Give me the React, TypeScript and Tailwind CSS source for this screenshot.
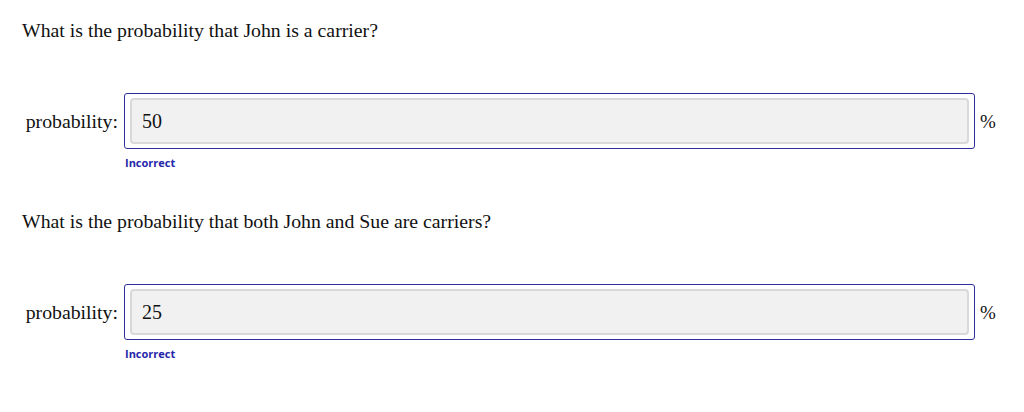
import React from 'react';

interface QuestionProps {
  prompt: string;
  value: string;
  first?: boolean;
}

const Question = ({ prompt, value, first }: QuestionProps) => {
  return (
    <div className={first ? 'pt-[19px]' : 'pt-[39px]'}>
      <p className="pl-[22px] text-[19.8px] leading-[23px] text-[#111]">{prompt}</p>

      <div className="mt-[51px] flex items-center">
        <label className="w-[118px] text-right text-[19.8px] leading-[23px] text-[#111]">
          probability:
        </label>
        <div className="ml-[6px] w-[851px] rounded-[3px] border border-[#2e2e9e] px-[5px] py-[4px]">
          <input
            readOnly
            value={value}
            className="h-[46px] w-full rounded-[4px] border-2 border-[#d9d9d9] bg-[#f1f1f1] pl-[10px] text-[20px] text-[#111] outline-none"
            style={{ fontFamily: '"Liberation Serif", serif' }}
          />
        </div>
        <span className="ml-[5px] text-[19px] leading-[23px] text-[#111]">%</span>
      </div>

      <div
        className="ml-[125px] mt-[6px] text-[11px] font-bold leading-[16px] text-[#2626aa]"
        style={{ fontFamily: '"Open Sans", sans-serif' }}
      >
        Incorrect
      </div>
    </div>
  );
};

const App = () => {
  return (
    <div
      className="h-[412px] w-[1024px] overflow-hidden bg-white"
      style={{ fontFamily: '"Liberation Serif", serif' }}
    >
      <Question first prompt="What is the probability that John is a carrier?" value="50" />
      <Question prompt="What is the probability that both John and Sue are carriers?" value="25" />
    </div>
  );
};

export default App;
